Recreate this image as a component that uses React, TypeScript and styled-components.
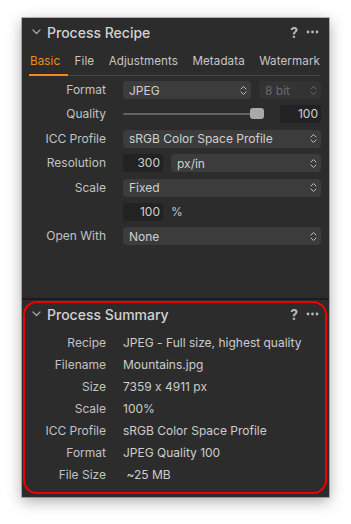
import React from 'react'
import styled, { createGlobalStyle } from 'styled-components'

const GlobalStyle = createGlobalStyle`
  html, body {
    margin: 0;
    padding: 0;
    background: #ffffff;
  }
  body {
    font-family: Inter, "Open Sans", "Liberation Sans", sans-serif;
    font-feature-settings: 'calt' 0;
    -webkit-font-smoothing: antialiased;
  }
`

const Chevron = () => (
  <svg width="9" height="6" viewBox="0 0 9 6">
    <path d="M1 1 L4.5 4.5 L8 1" fill="none" stroke="#a8a8a8" strokeWidth="1.2" strokeLinecap="round" strokeLinejoin="round" />
  </svg>
)

const UpDown = ({ dim }: { dim?: boolean }) => (
  <svg width="7" height="11" viewBox="0 0 7 11">
    <path d="M1 4 L3.5 1.5 L6 4 M1 7 L3.5 9.5 L6 7" fill="none" stroke={dim ? '#6a6a6a' : '#bdbdbd'} strokeWidth="1" strokeLinecap="round" strokeLinejoin="round" />
  </svg>
)

const Dots = () => (
  <svg width="13" height="4" viewBox="0 0 13 4">
    <circle cx="2" cy="2" r="1.4" fill="#b8b8b8" />
    <circle cx="6.5" cy="2" r="1.4" fill="#b8b8b8" />
    <circle cx="11" cy="2" r="1.4" fill="#b8b8b8" />
  </svg>
)

const App = () => {
  const tabs = ['Basic', 'File', 'Adjustments', 'Metadata', 'Watermark']
  const summary: [string, string][] = [
    ['Recipe', 'JPEG - Full size, highest quality'],
    ['Filename', 'Mountains.jpg'],
    ['Size', '7359 x 4911 px'],
    ['Scale', '100%'],
    ['ICC Profile', 'sRGB Color Space Profile'],
    ['Format', 'JPEG Quality 100'],
    ['File Size', ' ~25 MB']
  ]

  return (
    <>
      <GlobalStyle />
      <Page>
        <Panel>
          <RecipeSection>
            <Header>
              <Chevron />
              <Title>Process Recipe</Title>
              <HeaderTools>
                <Help>?</Help>
                <Dots />
              </HeaderTools>
            </Header>
            <Tabs>
              {tabs.map((t, i) => (
                <Tab key={t} active={i === 0}>{t}</Tab>
              ))}
            </Tabs>
            <Form>
              <Label>Format</Label>
              <Controls>
                <Select grow={1}>JPEG<UpDown /></Select>
                <Select width={62} disabled>8 bit<UpDown dim /></Select>
              </Controls>

              <Label>Quality</Label>
              <Controls>
                <Slider>
                  <Track />
                  <Thumb />
                </Slider>
                <NumberField width={41}>100</NumberField>
              </Controls>

              <Label>ICC Profile</Label>
              <Controls>
                <Select grow={1}>sRGB Color Space Profile<UpDown /></Select>
              </Controls>

              <Label>Resolution</Label>
              <Controls>
                <NumberField width={40}>300</NumberField>
                <Select grow={1}>px/in<UpDown /></Select>
              </Controls>

              <Label>Scale</Label>
              <Controls>
                <Select grow={1}>Fixed<UpDown /></Select>
              </Controls>

              <Label />
              <Controls>
                <NumberField width={40}>100</NumberField>
                <Unit>%</Unit>
              </Controls>

              <Label>Open With</Label>
              <Controls>
                <Select grow={1}>None<UpDown /></Select>
              </Controls>
            </Form>
          </RecipeSection>

          <SummarySection>
            <Header>
              <Chevron />
              <Title>Process Summary</Title>
              <HeaderTools>
                <Help>?</Help>
                <Dots />
              </HeaderTools>
            </Header>
            <SummaryGrid>
              {summary.map(([k, v]) => (
                <React.Fragment key={k}>
                  <SummaryLabel>{k}</SummaryLabel>
                  <SummaryValue>{v}</SummaryValue>
                </React.Fragment>
              ))}
            </SummaryGrid>
          </SummarySection>
        </Panel>
      </Page>
    </>
  )
}

export default App

const Page = styled.div`
  width: 351px;
  height: 524px;
  padding: 18px 0 0 22px;
  box-sizing: border-box;
`

const Panel = styled.div`
  width: 307px;
  height: 479px;
  background: #2c2c2c;
  box-shadow: 0 4px 14px rgba(0, 0, 0, 0.35), 0 0 0 1px rgba(0, 0, 0, 0.25);
  display: flex;
  flex-direction: column;
`

const RecipeSection = styled.section`
  height: 280px;
  border-bottom: 2px solid #1c1c1c;
`

const Header = styled.div`
  height: 28px;
  display: flex;
  align-items: center;
  padding: 0 10px 0 10px;
  gap: 6px;
`

const Title = styled.div`
  flex: 1;
  font-size: 14px;
  font-weight: 500;
  color: #d2d2d2;
`

const HeaderTools = styled.div`
  display: flex;
  align-items: center;
  gap: 8px;
`

const Help = styled.span`
  font-size: 14px;
  font-weight: 700;
  color: #b8b8b8;
`

const Tabs = styled.div`
  display: flex;
  justify-content: space-between;
  margin: 0 8px 0 7px;
  padding: 0 1px 0 1px;
  height: 29px;
  align-items: center;
  border-bottom: 1px solid #454545;
`

const Tab = styled.div<{ active?: boolean }>`
  position: relative;
  font-size: 11.6px;
  font-weight: 400;
  letter-spacing: 0.1px;
  color: ${p => (p.active ? '#f08a1c' : '#c6c6c6')};
  height: 100%;
  display: flex;
  align-items: center;

  &::after {
    content: '';
    display: ${p => (p.active ? 'block' : 'none')};
    position: absolute;
    left: -1px;
    right: -8px;
    bottom: -1px;
    height: 2px;
    background: #f08a1c;
  }
`

const Form = styled.div`
  display: grid;
  grid-template-columns: 84px 1fr;
  column-gap: 17px;
  row-gap: 6.4px;
  padding: 5px 8px 0 0;
  align-items: center;
`

const Label = styled.div`
  text-align: right;
  font-size: 12px;
  color: #c2c2c2;
  height: 18px;
  line-height: 18px;
`

const Controls = styled.div`
  display: flex;
  align-items: center;
  gap: 8px;
  height: 18px;
`

const Select = styled.div<{ grow?: number; width?: number; disabled?: boolean }>`
  flex: ${p => (p.grow ? p.grow : '0 0 auto')};
  width: ${p => (p.width ? `${p.width}px` : 'auto')};
  height: 18px;
  box-sizing: border-box;
  background: ${p => (p.disabled ? '#333333' : '#3c3c3c')};
  border-radius: 4px;
  padding: 0 4px 0 6px;
  display: flex;
  align-items: center;
  justify-content: space-between;
  font-size: 12px;
  color: ${p => (p.disabled ? '#6a6a6a' : '#d0d0d0')};
`

const NumberField = styled.div<{ width: number }>`
  width: ${p => p.width}px;
  height: 18px;
  box-sizing: border-box;
  background: #222222;
  border-radius: 3px;
  padding: 0 3px;
  text-align: right;
  line-height: 18px;
  font-size: 12px;
  color: #d0d0d0;
`

const Unit = styled.span`
  font-size: 12px;
  color: #c6c6c6;
`

const Slider = styled.div`
  position: relative;
  flex: 1;
  height: 18px;
  margin-right: 8px;
`

const Track = styled.div`
  position: absolute;
  left: 0;
  right: 0;
  top: 8px;
  height: 2px;
  border-radius: 1px;
  background: #626262;
`

const Thumb = styled.div`
  position: absolute;
  right: 0;
  top: 3px;
  width: 14px;
  height: 11px;
  border-radius: 3px;
  background: #a9a9a9;
`

const SummarySection = styled.section`
  position: relative;
  flex: 1;

  &::after {
    content: '';
    position: absolute;
    left: 1px;
    right: 2px;
    top: 1px;
    bottom: 3px;
    border: 2.5px solid #ee0000;
    border-radius: 14px;
    pointer-events: none;
  }
`

const SummaryGrid = styled.div`
  display: grid;
  grid-template-columns: 84px 1fr;
  column-gap: 17px;
  grid-auto-rows: 22px;
  padding-top: 3px;
  align-items: center;
`

const SummaryLabel = styled.div`
  text-align: right;
  font-size: 12px;
  color: #c2c2c2;
`

const SummaryValue = styled.div`
  font-size: 12px;
  color: #cdcdcd;
  white-space: pre;
`
